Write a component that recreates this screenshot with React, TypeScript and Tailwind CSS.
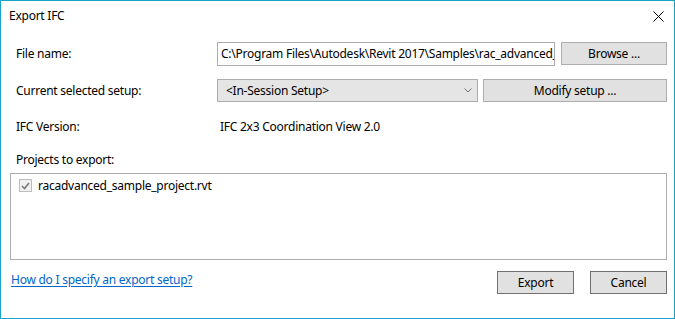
import React from "react";

function Btn({ children, className }: { children: React.ReactNode; className: string }) {
  return (
    <div className={"flex items-center justify-center bg-[#e1e1e1] border text-black " + className}>
      {children}
    </div>
  );
}

export default function App() {
  return (
    <div
      className="w-[675px] h-[319px] border border-[#18a3c7] bg-white flex flex-col text-[12px] leading-[16px] tracking-[-0.25px] text-black"
      style={{ fontFamily: '"Noto Sans", "Open Sans", sans-serif' }}
    >
      <div className="h-[30px] flex items-center justify-between pl-[8px] pr-[9px]">
        <span>Export IFC</span>
        <svg width="11" height="11" viewBox="0 0 11 11" className="mr-[1px]">
          <path d="M0.5 0.5 L10.5 10.5 M10.5 0.5 L0.5 10.5" stroke="#000" strokeWidth="1" fill="none" />
        </svg>
      </div>
      <div className="flex flex-col pl-[9px] pr-[7px]">
        <div className="mt-[11px] flex items-start h-[24px]">
          <div className="w-[207px] pl-[6px] h-[24px] flex items-center">File name:</div>
          <div className="w-[338px] h-[24px] border border-[#abadb3] pl-[3px] overflow-hidden">
            <div className="h-[22px] flex items-center whitespace-nowrap overflow-hidden">
              C:\Program Files\Autodesk\Revit 2017\Samples\rac_advanced_sample_project.rvt
            </div>
          </div>
          <Btn className="ml-[6px] w-[106px] h-[23px] border-[#adadad]">Browse ...</Btn>
        </div>
        <div className="mt-[13px] flex items-start h-[23px]">
          <div className="w-[207px] pl-[6px] h-[23px] flex items-center">Current selected setup:</div>
          <div className="w-[261px] h-[23px] border border-[#acacac] bg-[#e5e5e5] flex items-center justify-between pl-[8px] pr-[5px]">
            <span>&lt;In-Session Setup&gt;</span>
            <svg width="8" height="5" viewBox="0 0 8 5">
              <path d="M0.5 0.5 L4 4 L7.5 0.5" stroke="#707070" strokeWidth="1" fill="none" />
            </svg>
          </div>
          <Btn className="ml-[5px] w-[184px] h-[23px] border-[#adadad]">Modify setup ...</Btn>
        </div>
        <div className="mt-[17px] flex h-[16px]">
          <div className="w-[207px] pl-[6px]">IFC Version:</div>
          <div className="pl-[3px]">IFC 2x3 Coordination View 2.0</div>
        </div>
        <div className="mt-[17px] h-[16px] pl-[6px]">Projects to export:</div>
        <div className="mt-[5px] h-[87px] border border-[#acacac] pt-[5px] pl-[8px]">
          <div className="flex items-center h-[13px]">
            <div className="w-[13px] h-[13px] border border-[#bcbcbc] bg-[#f0f0f0] flex items-center justify-center">
              <svg width="9" height="8" viewBox="0 0 9 8">
                <path d="M1 4 L3.5 6.5 L8 1" stroke="#777" strokeWidth="1.6" fill="none" />
              </svg>
            </div>
            <span className="ml-[6px]">racadvanced_sample_project.rvt</span>
          </div>
        </div>
        <div className="mt-[11px] flex items-start justify-between">
          <a className="ml-[1px] mt-[1px] text-[#0066cc] underline underline-offset-[2px]">How do I specify an export setup?</a>
          <div className="flex gap-[16px]">
            <Btn className="w-[77px] h-[23px] border-[#707070]">Export</Btn>
            <Btn className="w-[77px] h-[23px] border-[#707070]">Cancel</Btn>
          </div>
        </div>
      </div>
    </div>
  );
}
